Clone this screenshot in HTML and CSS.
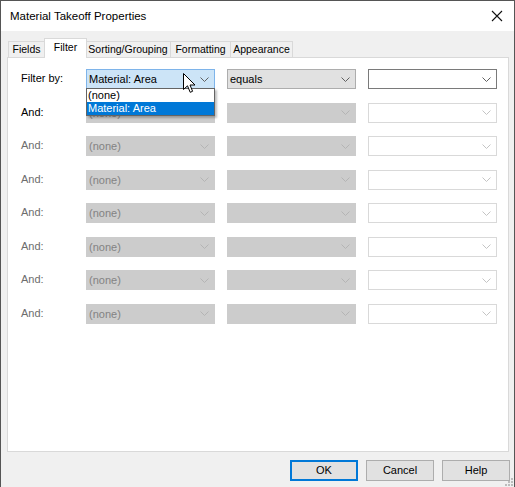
FILE: index.html
```html
<!DOCTYPE html>
<html>
<head>
<meta charset="utf-8">
<link rel="stylesheet" href="styles.css">
</head>
<body>
<div class="window">
  <div class="titlebar">
    <span class="title">Material Takeoff Properties</span>
    <svg class="close" width="12" height="12" viewBox="0 0 12 12"><path d="M1 1 L11 11 M11 1 L1 11" stroke="#111" stroke-width="1.1" fill="none"/></svg>
  </div>
  <div class="client">
    <div class="tabs">
      <div class="tab t-fields">Fields</div>
      <div class="tab t-filter active">Filter</div>
      <div class="tab t-sort">Sorting/Grouping</div>
      <div class="tab t-format">Formatting</div>
      <div class="tab t-app">Appearance</div>
    </div>
    <div class="panel">
      <div class="grid">
        <div class="label">Filter by:</div>
        <div class="combo active"><span>Material: Area</span><svg class="chev" width="9" height="5" viewBox="0 0 9 5"><path d="M0.5 0.5 L4.5 4.5 L8.5 0.5" stroke="#606060" fill="none"/></svg>
          <div class="dropdown">
            <div class="item">(none)</div>
            <div class="item sel">Material: Area</div>
          </div>
        </div>
        <div class="combo normal"><span>equals</span><svg class="chev" width="9" height="5" viewBox="0 0 9 5"><path d="M0.5 0.5 L4.5 4.5 L8.5 0.5" stroke="#606060" fill="none"/></svg></div>
        <div class="combo edit"><span></span><svg class="chev" width="9" height="5" viewBox="0 0 9 5"><path d="M0.5 0.5 L4.5 4.5 L8.5 0.5" stroke="#606060" fill="none"/></svg></div>

        <div class="label">And:</div>
        <div class="combo dis"><span>(none)</span><svg class="chev" width="9" height="5" viewBox="0 0 9 5"><path d="M0.5 0.5 L4.5 4.5 L8.5 0.5" stroke="#b4b4b4" fill="none"/></svg></div>
        <div class="combo dis"><span></span><svg class="chev" width="9" height="5" viewBox="0 0 9 5"><path d="M0.5 0.5 L4.5 4.5 L8.5 0.5" stroke="#b4b4b4" fill="none"/></svg></div>
        <div class="combo disedit"><span></span><svg class="chev" width="9" height="5" viewBox="0 0 9 5"><path d="M0.5 0.5 L4.5 4.5 L8.5 0.5" stroke="#c4c4c4" fill="none"/></svg></div>

        <div class="label dim">And:</div>
        <div class="combo dis"><span>(none)</span><svg class="chev" width="9" height="5" viewBox="0 0 9 5"><path d="M0.5 0.5 L4.5 4.5 L8.5 0.5" stroke="#b4b4b4" fill="none"/></svg></div>
        <div class="combo dis"><span></span><svg class="chev" width="9" height="5" viewBox="0 0 9 5"><path d="M0.5 0.5 L4.5 4.5 L8.5 0.5" stroke="#b4b4b4" fill="none"/></svg></div>
        <div class="combo disedit"><span></span><svg class="chev" width="9" height="5" viewBox="0 0 9 5"><path d="M0.5 0.5 L4.5 4.5 L8.5 0.5" stroke="#c4c4c4" fill="none"/></svg></div>

        <div class="label dim">And:</div>
        <div class="combo dis"><span>(none)</span><svg class="chev" width="9" height="5" viewBox="0 0 9 5"><path d="M0.5 0.5 L4.5 4.5 L8.5 0.5" stroke="#b4b4b4" fill="none"/></svg></div>
        <div class="combo dis"><span></span><svg class="chev" width="9" height="5" viewBox="0 0 9 5"><path d="M0.5 0.5 L4.5 4.5 L8.5 0.5" stroke="#b4b4b4" fill="none"/></svg></div>
        <div class="combo disedit"><span></span><svg class="chev" width="9" height="5" viewBox="0 0 9 5"><path d="M0.5 0.5 L4.5 4.5 L8.5 0.5" stroke="#c4c4c4" fill="none"/></svg></div>

        <div class="label dim">And:</div>
        <div class="combo dis"><span>(none)</span><svg class="chev" width="9" height="5" viewBox="0 0 9 5"><path d="M0.5 0.5 L4.5 4.5 L8.5 0.5" stroke="#b4b4b4" fill="none"/></svg></div>
        <div class="combo dis"><span></span><svg class="chev" width="9" height="5" viewBox="0 0 9 5"><path d="M0.5 0.5 L4.5 4.5 L8.5 0.5" stroke="#b4b4b4" fill="none"/></svg></div>
        <div class="combo disedit"><span></span><svg class="chev" width="9" height="5" viewBox="0 0 9 5"><path d="M0.5 0.5 L4.5 4.5 L8.5 0.5" stroke="#c4c4c4" fill="none"/></svg></div>

        <div class="label dim">And:</div>
        <div class="combo dis"><span>(none)</span><svg class="chev" width="9" height="5" viewBox="0 0 9 5"><path d="M0.5 0.5 L4.5 4.5 L8.5 0.5" stroke="#b4b4b4" fill="none"/></svg></div>
        <div class="combo dis"><span></span><svg class="chev" width="9" height="5" viewBox="0 0 9 5"><path d="M0.5 0.5 L4.5 4.5 L8.5 0.5" stroke="#b4b4b4" fill="none"/></svg></div>
        <div class="combo disedit"><span></span><svg class="chev" width="9" height="5" viewBox="0 0 9 5"><path d="M0.5 0.5 L4.5 4.5 L8.5 0.5" stroke="#c4c4c4" fill="none"/></svg></div>

        <div class="label dim">And:</div>
        <div class="combo dis"><span>(none)</span><svg class="chev" width="9" height="5" viewBox="0 0 9 5"><path d="M0.5 0.5 L4.5 4.5 L8.5 0.5" stroke="#b4b4b4" fill="none"/></svg></div>
        <div class="combo dis"><span></span><svg class="chev" width="9" height="5" viewBox="0 0 9 5"><path d="M0.5 0.5 L4.5 4.5 L8.5 0.5" stroke="#b4b4b4" fill="none"/></svg></div>
        <div class="combo disedit"><span></span><svg class="chev" width="9" height="5" viewBox="0 0 9 5"><path d="M0.5 0.5 L4.5 4.5 L8.5 0.5" stroke="#c4c4c4" fill="none"/></svg></div>

        <div class="label dim">And:</div>
        <div class="combo dis"><span>(none)</span><svg class="chev" width="9" height="5" viewBox="0 0 9 5"><path d="M0.5 0.5 L4.5 4.5 L8.5 0.5" stroke="#b4b4b4" fill="none"/></svg></div>
        <div class="combo dis"><span></span><svg class="chev" width="9" height="5" viewBox="0 0 9 5"><path d="M0.5 0.5 L4.5 4.5 L8.5 0.5" stroke="#b4b4b4" fill="none"/></svg></div>
        <div class="combo disedit"><span></span><svg class="chev" width="9" height="5" viewBox="0 0 9 5"><path d="M0.5 0.5 L4.5 4.5 L8.5 0.5" stroke="#c4c4c4" fill="none"/></svg></div>
      </div>
    </div>
    <div class="buttons">
      <div class="btn default">OK</div>
      <div class="btn">Cancel</div>
      <div class="btn">Help</div>
    </div>
    <svg class="grip" width="8" height="8" viewBox="0 0 8 8">
      <rect x="6" y="0" width="2" height="2" fill="#bcbcbc"/>
      <rect x="3" y="3" width="2" height="2" fill="#bcbcbc"/>
      <rect x="6" y="3" width="2" height="2" fill="#bcbcbc"/>
      <rect x="0" y="6" width="2" height="2" fill="#bcbcbc"/>
      <rect x="3" y="6" width="2" height="2" fill="#bcbcbc"/>
      <rect x="6" y="6" width="2" height="2" fill="#bcbcbc"/>
    </svg>
  </div>
  <svg class="cursor" width="13" height="21" viewBox="0 0 13 21">
    <path d="M0.5 0.5 L0.5 16.5 L4.5 12.8 L7.2 19.3 L9.6 18.3 L7 12 L12 12 Z" fill="#fff" stroke="#000" stroke-width="1" stroke-linejoin="miter"/>
  </svg>
</div>
</body>
</html>
```
FILE: styles.css
```css
html, body {
  margin: 0;
  padding: 0;
  width: 515px;
  height: 487px;
  overflow: hidden;
  background: #f0f0f0;
}
body {
  font-family: "Liberation Sans", Arial, sans-serif;
  font-size: 11px;
  color: #000;
}
.window {
  position: relative;
  width: 513px;
  height: 486px;
  border: 1px solid #555;
  border-bottom: none;
  background: #f0f0f0;
}
.titlebar {
  height: 30px;
  background: #fff;
  display: flex;
  align-items: center;
  justify-content: space-between;
  padding: 0 11px 0 9px;
}
.title {
  font-size: 11.5px;
  color: #000;
  margin-top: -1px;
}
.close {
  margin-top: -1px;
}
.client {
  position: relative;
  height: 456px;
  display: flex;
  flex-direction: column;
}
.tabs {
  display: flex;
  align-items: flex-end;
  height: 19px;
  margin-top: 7px;
  padding-left: 7px;
  position: relative;
  z-index: 2;
  font-size: 10.5px;
}
.tab {
  height: 16px;
  line-height: 15px;
  border: 1px solid #d9d9d9;
  border-bottom: none;
  border-left: none;
  background: #f0f0f0;
  text-align: center;
  box-sizing: border-box;
  color: #000;
  white-space: nowrap;
}
.t-fields { width: 37px; border-left: 1px solid #d9d9d9; }
.t-filter { width: 41px; }
.t-sort { width: 85px; }
.t-format { width: 60px; }
.t-app { width: 62px; }
.tab.active {
  background: #fff;
  height: 20px;
  line-height: 17px;
  border-left: 1px solid #d9d9d9;
  margin-left: -1px;
  margin-right: -1px;
  width: 43px;
  position: relative;
  top: 1px;
}
.panel {
  margin-left: 6px;
  width: 502px;
  height: 395px;
  box-sizing: border-box;
  background: #fff;
  border: 1px solid #d9d9d9;
}
.grid {
  display: grid;
  grid-template-columns: 53px 129px 129px 129px;
  column-gap: 12px;
  grid-auto-rows: 33.57px;
  padding: 11px 0 0 13px;
}
.label {
  height: 20px;
  line-height: 19px;
  color: #000;
}
.label.dim {
  color: #6d6d6d;
}
.combo {
  position: relative;
  height: 20px;
  box-sizing: border-box;
  display: flex;
  align-items: center;
  justify-content: space-between;
  padding: 0 5px 0 2px;
  border: 1px solid #adadad;
}
.combo span {
  line-height: 18px;
  white-space: nowrap;
}
.combo.active {
  background: #cce4f7;
  border-color: #7eb4ea;
  z-index: 3;
}
.combo.normal {
  background: #e1e1e1;
  border-color: #adadad;
}
.combo.edit {
  background: #fff;
  border-color: #7a7a7a;
}
.combo.dis {
  background: #cccccc;
  border-color: #cccccc;
  color: #838383;
}
.combo.disedit {
  background: #fff;
  border-color: #d9d9d9;
}
.chev {
  flex: none;
}
.dropdown {
  position: absolute;
  left: -1px;
  top: 18px;
  width: 129px;
  box-sizing: border-box;
  border: 1px solid #646464;
  background: #fff;
  box-shadow: 2px 2px 2px rgba(0,0,0,0.25);
}
.item {
  height: 13px;
  line-height: 13px;
  padding-left: 1px;
  color: #000;
  white-space: nowrap;
}
.item.sel {
  background: #0078d7;
  color: #fff;
}
.buttons {
  display: flex;
  justify-content: flex-end;
  gap: 8px;
  margin-top: 8px;
  padding-right: 4px;
}
.btn {
  width: 68px;
  height: 21px;
  box-sizing: border-box;
  border: 1px solid #adadad;
  background: #e1e1e1;
  text-align: center;
  line-height: 19px;
}
.btn.default {
  border: 2px solid #0078d7;
  line-height: 17px;
}
.grip {
  position: absolute;
  right: 1px;
  bottom: 1px;
}
.cursor {
  position: absolute;
  left: 182px;
  top: 72px;
  z-index: 10;
}
```
